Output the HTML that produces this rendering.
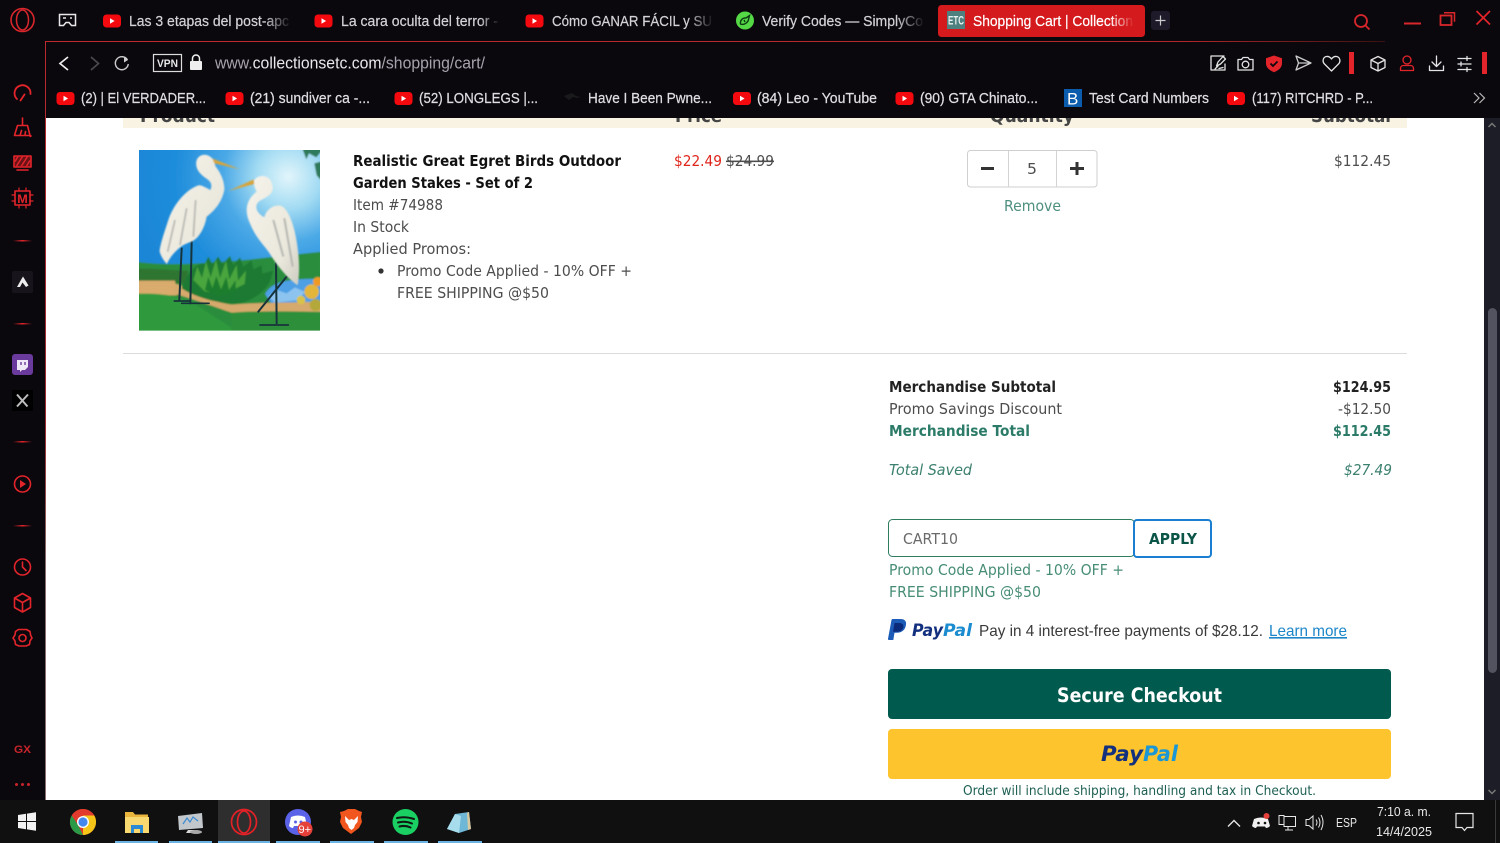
<!DOCTYPE html>
<html><head><meta charset="utf-8"><title>Shopping Cart</title>
<style>
html,body{margin:0;padding:0;background:#0a080d;width:1500px;height:843px;overflow:hidden}
svg{display:block}
text{white-space:pre}
.u{font-family:"Liberation Sans",sans-serif;font-size:14.5px;fill:#d4d2d6;stroke:#d4d2d6;stroke-width:.2px}
.b{font-family:"Liberation Sans",sans-serif;font-size:14.5px;fill:#e0dee2;stroke:#e0dee2;stroke-width:.2px}
.p{font-family:"DejaVu Sans",sans-serif;font-size:15.5px;fill:#4d4d4d}
.pb{font-family:"DejaVu Sans",sans-serif;font-size:15.5px;font-weight:bold;fill:#222}
.r{fill:none;stroke:#e3242b;stroke-width:1.6;stroke-linecap:round;stroke-linejoin:round}
.w{fill:none;stroke:#e4e4e4;stroke-width:1.3;stroke-linecap:round;stroke-linejoin:round}
</style></head><body>
<svg xmlns="http://www.w3.org/2000/svg" width="1500" height="843" viewBox="0 0 1500 843">
<defs>
<g id="yt"><rect x="0" y="0" width="18" height="13" rx="3.500" fill="#f4090f"/><path d="M7 3.800v5.400l4.600-2.700z" fill="#fff"/></g>
<radialGradient id="sky" gradientUnits="userSpaceOnUse" cx="490" cy="110" r="470"><stop offset="0" stop-color="#e2f5fb"/><stop offset=".2" stop-color="#a4dcf3"/><stop offset=".42" stop-color="#4aa8e6"/><stop offset=".72" stop-color="#1f8ddb"/><stop offset="1" stop-color="#1a86d6"/></radialGradient>
<linearGradient id="fade" x1="0" x2="1"><stop offset="0" stop-color="#0a080d" stop-opacity="0"/><stop offset="1" stop-color="#0a080d"/></linearGradient>
<linearGradient id="fader" x1="0" x2="1"><stop offset="0" stop-color="#d41a1c" stop-opacity="0"/><stop offset="1" stop-color="#d41a1c"/></linearGradient>
<linearGradient id="line" x1="0" x2="1"><stop offset="0" stop-color="#c02a2e"/><stop offset=".85" stop-color="#b3272a"/><stop offset="1" stop-color="#3a1113"/></linearGradient>
<linearGradient id="vline" x1="0" x2="0" y1="0" y2="1"><stop offset="0" stop-color="#b82a2e"/><stop offset=".5" stop-color="#a02c30"/><stop offset=".7" stop-color="#85706f"/><stop offset="1" stop-color="#85706f"/></linearGradient>
<linearGradient id="dash" x1="0" x2="1"><stop offset="0" stop-color="#e3242b" stop-opacity="0"/><stop offset=".5" stop-color="#e3242b"/><stop offset="1" stop-color="#e3242b" stop-opacity="0"/></linearGradient>
<linearGradient id="birdw" x1="0" x2="1" y1="0" y2="1"><stop offset="0" stop-color="#f6f3ea"/><stop offset=".7" stop-color="#eae7dc"/><stop offset="1" stop-color="#cfcdc2"/></linearGradient>
<clipPath id="imgclip"><rect x="42" y="30" width="543" height="542"/></clipPath>
<filter id="soft" x="-5%" y="-5%" width="110%" height="110%"><feGaussianBlur stdDeviation="2.500"/></filter>
</defs>

<rect width="1500" height="843" fill="#0a080d"/>

<!-- Page -->
<rect x="46" y="118" width="1438" height="682" fill="#fff"/>
<rect x="123" y="100" width="1284" height="28" fill="#f8f3e3"/>
<g font-family="'DejaVu Sans',sans-serif" font-size="19" font-weight="bold" fill="#444">
<text x="140" y="122" textLength="75" lengthAdjust="spacingAndGlyphs">Product</text>
<text x="675" y="122" textLength="47" lengthAdjust="spacingAndGlyphs">Price</text>
<text x="990" y="122" textLength="84" lengthAdjust="spacingAndGlyphs">Quantity</text>
<text x="1311" y="122" textLength="80" lengthAdjust="spacingAndGlyphs">Subtotal</text>
</g>

<!-- Product image -->
<g transform="translate(125 140) scale(.33333)">
<g clip-path="url(#imgclip)">
<g filter="url(#soft)">
<rect x="10" y="0" width="610" height="610" fill="url(#sky)"/>
<path d="M530 20l14 38 8-18 22 12 26-32zM568 70l30-8v70l-23-26z" fill="#2f7a5c"/>
<path d="M10 362C120 378 200 372 300 365S480 345 620 333V610H10z" fill="#2c8d3e"/>
<path d="M10 388C80 382 140 392 190 392L180 430H10z" fill="#2f7430"/>
<path d="M420 462C440 425 490 412 620 418V492L440 492z" fill="#4d9fe6"/>
<path d="M430 470l25-20 30 10 25-18 30 14-20 24-70 8z" fill="#8cc4ef"/>
<path d="M10 422H150L156 466H10z" fill="#d9ab6c"/>
<path d="M10 462C110 458 150 466 200 486L330 570V610H10z" fill="#2f9a3d"/>
<path d="M320 518C400 512 500 516 620 514V610H320z" fill="#2d8f3a"/>
<path d="M150 430L180 442C220 470 280 488 320 494C400 486 500 490 620 482V516C500 514 400 512 320 518C280 505 210 478 150 462z" fill="#d6a96c"/>
<path d="M170 445C185 395 215 370 240 370L250 350 262 372 280 350 292 372 315 348 325 375 345 352 355 380 380 360 385 388 410 375 412 400 445 392 435 425C420 455 380 485 340 490S215 475 170 445z" fill="#1f7a30"/>
<path d="M205 420l12-40 14 34 12-50 14 48 16-54 12 56 18-52 10 56 22-44 4 48 24-30-4 40-60 30-60-8z" fill="#4aa53c"/>
<path d="M240 450l10-40 12 34 12-36 14 40 16-38 8 40 20-30 0 34-50 14z" fill="#1f7d2e"/>
<circle cx="560" cy="455" r="22" fill="#e3b63b"/><circle cx="578" cy="425" r="14" fill="#f09a28"/><circle cx="572" cy="495" r="18" fill="#b5a83a"/><circle cx="528" cy="480" r="13" fill="#d9c24a"/>
</g>
<g fill="none" stroke="#17333c" stroke-width="6" stroke-linecap="round">
<path d="M170 325L163 480M200 305L196 490M453 370L455 550M485 410L400 515"/>
<path d="M148 483H195M170 490H252M405 555H490" stroke-width="5"/>
</g>
<g filter="url(#soft)">
<path d="M266 62C256 42 226 36 215 60C208 85 225 102 240 113C255 122 264 132 256 150C245 145 232 135 220 136C180 150 145 195 130 240C115 285 104 320 104 335C108 350 118 365 126 372C135 350 150 335 165 322C180 310 195 308 205 302C225 290 240 260 245 230C265 215 290 190 298 150C300 125 285 95 272 80z" fill="url(#birdw)"/>
<path d="M262 55L345 88L268 70z" fill="#d6a53c"/>
<path d="M150 240L128 335M185 205L165 315M212 180L205 290" stroke="#b4b6b0" stroke-width="5" fill="none"/>
<path d="M385 125C395 102 438 98 443 140C446 165 420 172 402 184C388 196 392 218 418 232C425 205 450 192 470 198C500 215 515 290 520 340C524 380 522 415 518 436C495 420 470 395 440 350C420 315 395 300 375 250C358 215 362 180 395 155C390 145 386 135 385 125z" fill="url(#birdw)"/>
<path d="M386 118L310 153L388 132z" fill="#d6a53c"/>
<path d="M445 240L475 350M478 235L503 380" stroke="#b4b6b0" stroke-width="6" fill="none"/>
</g>
</g>
</g>

<!-- Product text -->
<g>
<text class="pb" x="353" y="166" textLength="268" lengthAdjust="spacingAndGlyphs" style="fill:#111">Realistic Great Egret Birds Outdoor</text>
<text class="pb" x="353" y="188" textLength="180" lengthAdjust="spacingAndGlyphs" style="fill:#111">Garden Stakes - Set of 2</text>
<text class="p" x="353" y="210" textLength="90" lengthAdjust="spacingAndGlyphs">Item #74988</text>
<text class="p" x="353" y="232" textLength="56" lengthAdjust="spacingAndGlyphs">In Stock</text>
<text class="p" x="353" y="254" textLength="118" lengthAdjust="spacingAndGlyphs">Applied Promos:</text>
<circle cx="381" cy="271" r="2.600" fill="#333"/>
<text class="p" x="397" y="276" textLength="235" lengthAdjust="spacingAndGlyphs">Promo Code Applied - 10% OFF +</text>
<text class="p" x="397" y="298" textLength="152" lengthAdjust="spacingAndGlyphs">FREE SHIPPING @$50</text>
<text class="p" x="674" y="166" textLength="48" lengthAdjust="spacingAndGlyphs" style="fill:#e0261c">$22.49</text>
<text class="p" x="726" y="166" textLength="48" lengthAdjust="spacingAndGlyphs" text-decoration="line-through">$24.99</text>
<text class="p" x="1334" y="166" textLength="57" lengthAdjust="spacingAndGlyphs">$112.45</text>
</g>
<!-- Qty -->
<rect x="967.500" y="150.500" width="129.500" height="36.500" rx="3" fill="#fff" stroke="#cfcfcf"/>
<path d="M1008.500 151V187M1056.500 151V187" stroke="#d4d4d4"/>
<path d="M981 168.500H994M1070 168.500H1084M1077 162V175" stroke="#333" stroke-width="3"/>
<text class="p" x="1027" y="174" textLength="10" lengthAdjust="spacingAndGlyphs">5</text>
<text class="p" x="1004" y="211" textLength="57" lengthAdjust="spacingAndGlyphs" style="fill:#4e8f80">Remove</text>
<rect x="123" y="353" width="1284" height="1" fill="#dcdcdc"/>

<!-- Totals -->
<text class="pb" x="889" y="392" textLength="167" lengthAdjust="spacingAndGlyphs">Merchandise Subtotal</text>
<text class="pb" x="1333" y="392" textLength="58" lengthAdjust="spacingAndGlyphs">$124.95</text>
<text class="p" x="889" y="414" textLength="173" lengthAdjust="spacingAndGlyphs">Promo Savings Discount</text>
<text class="p" x="1338" y="414" textLength="53" lengthAdjust="spacingAndGlyphs">-$12.50</text>
<text class="pb" x="889" y="436" textLength="141" lengthAdjust="spacingAndGlyphs" style="fill:#2b7b68">Merchandise Total</text>
<text class="pb" x="1333" y="436" textLength="58" lengthAdjust="spacingAndGlyphs" style="fill:#2b7b68">$112.45</text>
<text class="p" x="889" y="475" textLength="83" lengthAdjust="spacingAndGlyphs" font-style="italic" style="fill:#3c806f">Total Saved</text>
<text class="p" x="1344" y="475" textLength="48" lengthAdjust="spacingAndGlyphs" font-style="italic" style="fill:#3c806f">$27.49</text>

<!-- Promo -->
<rect x="888.500" y="519.500" width="246" height="37" rx="4" fill="#fff" stroke="#2f7d5e"/>
<text class="p" x="903" y="544" textLength="55" lengthAdjust="spacingAndGlyphs" style="fill:#6a6a6a">CART10</text>
<rect x="1134" y="520" width="77" height="37" rx="3" fill="#fff" stroke="#1a7fd0" stroke-width="2"/>
<text class="pb" x="1149" y="544" textLength="48" lengthAdjust="spacingAndGlyphs" style="fill:#0b5548">APPLY</text>
<text class="p" x="889" y="575" textLength="235" lengthAdjust="spacingAndGlyphs" style="fill:#478d76">Promo Code Applied - 10% OFF +</text>
<text class="p" x="889" y="597" textLength="152" lengthAdjust="spacingAndGlyphs" style="fill:#478d76">FREE SHIPPING @$50</text>

<!-- PayPal line -->
<path d="M893.500 619h7c4.500 0 6.300 2.500 5.300 6.800-1 4.700-4.500 7-9 7h-2.300l-1.200 7.200h-4.300a1 1 0 0 1-1-1.200l3.500-18.800a1.200 1.200 0 0 1 1.200-1z" fill="#1c5cb8"/>
<path d="M894.500 623h5c3 0 4.500 1.800 3.800 4.300-.7 3-3.200 4.500-6.300 4.500h-4z" fill="#0c2a7a"/>
<text x="912" y="636" font-family="'DejaVu Sans',sans-serif" font-weight="bold" font-style="italic" font-size="17" fill="#12307e" textLength="31" lengthAdjust="spacingAndGlyphs">Pay</text>
<text x="943" y="636" font-family="'DejaVu Sans',sans-serif" font-weight="bold" font-style="italic" font-size="17" fill="#1b8ccf" textLength="29" lengthAdjust="spacingAndGlyphs">Pal</text>
<text x="979" y="636" font-family="'Liberation Sans',sans-serif" font-size="16" fill="#3a3a3a" textLength="284" lengthAdjust="spacingAndGlyphs">Pay in 4 interest-free payments of $28.12.</text>
<text x="1269" y="636" font-family="'Liberation Sans',sans-serif" font-size="16" fill="#1c86c8" textLength="78" lengthAdjust="spacingAndGlyphs" text-decoration="underline">Learn more</text>

<!-- Buttons -->
<rect x="888" y="669" width="503" height="50" rx="4" fill="#005a4e"/>
<text x="1057" y="702" font-family="'DejaVu Sans',sans-serif" font-size="19.500" font-weight="bold" fill="#fff" textLength="165" lengthAdjust="spacingAndGlyphs">Secure Checkout</text>
<rect x="888" y="729" width="503" height="50" rx="4" fill="#fec42d"/>
<text x="1101" y="761" font-family="'DejaVu Sans',sans-serif" font-weight="bold" font-style="italic" font-size="21" fill="#12307e" textLength="42" lengthAdjust="spacingAndGlyphs">Pay</text>
<text x="1143" y="761" font-family="'DejaVu Sans',sans-serif" font-weight="bold" font-style="italic" font-size="21" fill="#1b97d5" textLength="35" lengthAdjust="spacingAndGlyphs">Pal</text>
<text x="963" y="795" font-family="'DejaVu Sans',sans-serif" font-size="13.500" fill="#1d5f52" textLength="353" lengthAdjust="spacingAndGlyphs">Order will include shipping, handling and tax in Checkout.</text>

<!-- Scrollbar -->
<rect x="1484" y="118" width="16" height="682" fill="#1d1d27"/>
<rect x="1488" y="308" width="9" height="365" rx="4.500" fill="#53535f"/>
<path d="M1488.500 127l3.500-3.500 3.500 3.500M1488.500 790l3.500 3.500 3.500-3.500" fill="none" stroke="#777" stroke-width="1.500"/>

<!-- Chrome top -->
<rect x="0" y="0" width="1500" height="118" fill="#0a080d"/>
<rect x="0" y="118" width="45" height="682" fill="#0a080d"/>
<rect x="45" y="41" width="1340" height="1" fill="url(#line)"/>
<rect x="45" y="42" width="1" height="758" fill="url(#vline)"/>

<!-- Opera logo -->
<g fill="none" stroke="#d8262b"><circle cx="22.500" cy="20" r="11.500" stroke-width="1.600"/><ellipse cx="22.500" cy="20" rx="6" ry="10" stroke-width="1.500"/></g>
<!-- Game icon -->
<path d="M59.500 14.500h16v11h-4l-2.500-3h-3l-2.500 3h-4z" fill="none" stroke="#e8e8e8" stroke-width="1.500"/><path d="M63 18h3M70 18h2" stroke="#e8e8e8" stroke-width="1.500"/>

<!-- Tabs -->
<use href="#yt" x="103" y="14.500"/>
<text class="u" x="129" y="26" textLength="160" lengthAdjust="spacingAndGlyphs">Las 3 etapas del post-apc</text>
<rect x="264" y="10" width="28" height="22" fill="url(#fade)"/>
<use href="#yt" x="314.500" y="14.500"/>
<text class="u" x="341" y="26" textLength="157" lengthAdjust="spacingAndGlyphs">La cara oculta del terror -</text>
<rect x="480" y="10" width="20" height="22" fill="url(#fade)"/>
<use href="#yt" x="525.500" y="14.500"/>
<text class="u" x="552" y="26" textLength="160" lengthAdjust="spacingAndGlyphs">Cómo GANAR FÁCIL y SU</text>
<rect x="688" y="10" width="26" height="22" fill="url(#fade)"/>
<circle cx="745" cy="20.500" r="9" fill="#55d845"/>
<path d="M740.500 24c-.5-3.500 2-6.500 5.500-6l3.500-2.500-1 4c-.5 3-4.500 6-8 4.500zM745 22l-1-2" fill="none" stroke="#0c3a12" stroke-width="1.400"/>
<text class="u" x="762" y="26" textLength="161" lengthAdjust="spacingAndGlyphs">Verify Codes — SimplyCo</text>
<rect x="896" y="10" width="29" height="22" fill="url(#fade)"/>
<rect x="938" y="5" width="207" height="32" rx="3.500" fill="#d41a1c"/>
<rect x="947" y="11" width="18" height="18" fill="#4f8080"/>
<text x="948" y="24.500" font-family="'Liberation Sans',sans-serif" font-weight="bold" font-size="11.500" fill="#e8f2f0" textLength="16" lengthAdjust="spacingAndGlyphs">ETC</text>
<text class="u" x="973" y="26" textLength="160" lengthAdjust="spacingAndGlyphs" style="fill:#fff;stroke:#fff">Shopping Cart | Collection</text>
<rect x="1110" y="10" width="24" height="22" fill="url(#fader)"/>
<rect x="1151" y="11" width="19" height="19" rx="3" fill="#1f1a29"/>
<path d="M1160.500 15.500v10M1155.500 20.500h10" stroke="#c9c9cc" stroke-width="1.200"/>

<!-- Window controls -->
<circle cx="1361" cy="21" r="6" fill="none" stroke="#d8262b" stroke-width="1.800"/><path d="M1365.500 25.500l4 4" stroke="#d8262b" stroke-width="1.800"/>
<rect x="1404" y="22.500" width="17" height="2" fill="#d8262b"/>
<rect x="1440.500" y="15.500" width="11" height="9.500" fill="none" stroke="#d8262b" stroke-width="1.800"/><path d="M1444 12.800h10.500v9" fill="none" stroke="#d8262b" stroke-width="1.500"/>
<path d="M1476.500 11l13.500 13.500M1490 11l-13.500 13.500" stroke="#e3242b" stroke-width="1.700"/>

<!-- Nav -->
<path d="M68 57l-8 6.500 8 6.500" fill="none" stroke="#eee" stroke-width="1.700"/>
<path d="M91 57l7.500 6.500-7.500 6.500" fill="none" stroke="#4a4a4e" stroke-width="1.700"/>
<path d="M127.500 60a6.500 6.500 0 1 0 .8 4" fill="none" stroke="#ccc" stroke-width="1.400"/><path d="M124 56.500l4 3.500-4 2.500z" fill="#ccc"/>
<rect x="153.500" y="54.500" width="28" height="17" fill="none" stroke="#dcdcdc" stroke-width="1.200"/>
<text x="157" y="67" font-family="'Liberation Sans',sans-serif" font-weight="bold" font-size="11" fill="#e6e6e6" textLength="21" lengthAdjust="spacingAndGlyphs">VPN</text>
<rect x="190" y="61" width="12" height="9" rx="1" fill="#eee"/><path d="M192.500 61v-2.500a3.500 3.500 0 0 1 7 0V61" fill="none" stroke="#eee" stroke-width="1.500"/>
<text x="215" y="68.500" font-family="'Liberation Sans',sans-serif" font-size="16.500" fill="#a8a2ad" textLength="270" lengthAdjust="spacingAndGlyphs">www.<tspan fill="#e9e7ea">collectionsetc.com</tspan>/shopping/cart/</text>

<!-- Toolbar icons -->
<path d="M1224 56h-13v14h14v-6" class="w"/><path d="M1216.500 66l1.500-4 5-5.500 2.500 2.500-5 5zM1215 69l3-3M1219 68.500l4-1" class="w"/>
<path d="M1238 59.500h3.500l1.500-2h5l1.500 2h3.500v10.500h-15z" class="w"/><circle cx="1245.500" cy="64.500" r="3.300" class="w"/>
<path d="M1274 55.500l8 2.800v5c0 4.500-3.500 7-8 9-4.500-2-8-4.500-8-9v-5z" fill="#e3242b"/><path d="M1270.500 63.500l2.500 2.500 4.500-4.500" fill="none" stroke="#0a080d" stroke-width="1.700"/>
<path d="M1296 56l15 7-15 7 2.500-7zM1298.500 63h12" class="w" style="stroke:#ccc"/>
<path d="M1331.500 71l-7-7c-2.500-2.500-1.500-7 2-7.500 2.500-.3 4 1 5 2.500 1-1.500 2.500-2.800 5-2.500 3.500.5 4.500 5 2 7.500z" class="w"/>
<rect x="1349" y="52" width="5" height="22" fill="#e3242b"/>
<path d="M1378 56.500l7 3.500v7.500l-7 3.500-7-3.500V60zM1371 60l7 3.500 7-3.500M1378 63.500V71" class="w"/>
<circle cx="1407" cy="60" r="4" class="r" style="stroke-width:1.300"/><path d="M1400.500 70.500v-2c0-2 1.500-3 3-3h7c1.500 0 3 1 3 3v2z" class="r" style="stroke-width:1.300"/>
<path d="M1436.500 56v10M1432 62l4.500 4.500 4.500-4.500M1429.500 66v4.500h14V66" class="w"/>
<path d="M1458 58.500h13M1458 64h13M1458 69.500h13" class="w"/><path d="M1467 56.500v4M1461 62v4M1467 67.500v4" class="w"/>
<rect x="1482" y="52" width="5" height="22" fill="#e3242b"/>

<!-- Bookmarks -->
<use href="#yt" x="56.500" y="92"/>
<text class="b" x="81" y="103" textLength="125" lengthAdjust="spacingAndGlyphs">(2) | El VERDADER...</text>
<use href="#yt" x="225.500" y="92"/>
<text class="b" x="250" y="103" textLength="120" lengthAdjust="spacingAndGlyphs">(21) sundiver ca -...</text>
<use href="#yt" x="394.500" y="92"/>
<text class="b" x="419" y="103" textLength="119" lengthAdjust="spacingAndGlyphs">(52) LONGLEGS |...</text>
<path d="M564 96l8-3 4 3 5 1-4 1-4-1-4 3z" fill="#1a1a1c"/>
<text class="b" x="588" y="103" textLength="124" lengthAdjust="spacingAndGlyphs">Have I Been Pwne...</text>
<use href="#yt" x="733" y="92"/>
<text class="b" x="757" y="103" textLength="120" lengthAdjust="spacingAndGlyphs">(84) Leo - YouTube</text>
<use href="#yt" x="895.500" y="92"/>
<text class="b" x="920" y="103" textLength="118" lengthAdjust="spacingAndGlyphs">(90) GTA Chinato...</text>
<rect x="1064" y="89" width="18" height="18" fill="#0b5cad"/>
<text x="1067" y="104.500" font-family="'Liberation Sans',sans-serif" font-size="17" fill="#fff">B</text>
<text class="b" x="1089" y="103" textLength="120" lengthAdjust="spacingAndGlyphs">Test Card Numbers</text>
<use href="#yt" x="1227" y="92"/>
<text class="b" x="1252" y="103" textLength="121" lengthAdjust="spacingAndGlyphs">(117) RITCHRD - P...</text>
<path d="M1474 93l5 5-5 5M1479.500 93l5 5-5 5" fill="none" stroke="#bbb" stroke-width="1.200"/>

<!-- Sidebar -->
<path d="M17 99a8 8 0 1 1 13.500-5" class="r" style="stroke-width:1.800"/><path d="M20.500 100.500l4-6" class="r" style="stroke-width:1.800"/>
<path d="M22.500 118v7M17.500 125.500h10l2.500 10H14.500zM20 135.500l1.500-5M25 135.500l.5-4" class="r"/><circle cx="30.500" cy="136" r="1.200" fill="#e3242b"/>
<rect x="14" y="156" width="17" height="11" class="r" style="fill:#6a1216"/><path d="M16.500 166l6-9.500M21.500 166l6-9.500M26.500 166l3.500-5.500M15 161.500l3-5" stroke="#e3242b" stroke-width="1.500"/><path d="M17 170h11" class="r"/>
<rect x="15" y="191" width="15" height="14" class="r"/><text x="17.300" y="203" font-family="'Liberation Sans',sans-serif" font-weight="bold" font-size="12" fill="#e3242b" textLength="10.500" lengthAdjust="spacingAndGlyphs">M</text><path d="M19 188v3M26 188v3M19 205v3M26 205v3M12 195h3M12 201h3M30 195h3M30 201h3" class="r" style="stroke-width:1.200"/>
<rect x="13" y="240" width="19" height="1.500" fill="url(#dash)"/>
<rect x="12" y="271" width="21" height="22" rx="2" fill="#17151b"/><path d="M17 287l4.500-8 1.500-2.500 5.500 9-2.500 1.500-3.500-4.500-2.500 4.500z" fill="#ededed"/>
<rect x="13" y="323" width="19" height="1.500" fill="url(#dash)"/>
<rect x="12" y="354" width="21" height="21" rx="3" fill="#6a3a9c"/><path d="M17 360h11v7l-3 3h-3l-2 2v-2h-3z" fill="#efe8f6"/><path d="M21 362v3M25 362v3" stroke="#6a3a9c" stroke-width="1.400"/>
<rect x="12" y="390" width="21" height="21" fill="#000"/><path d="M17 394.500l10.500 12M28 394.500l-11 12" stroke="#bdbdbd" stroke-width="2"/>
<rect x="13" y="441" width="19" height="1.500" fill="url(#dash)"/>
<circle cx="22.500" cy="484" r="8" class="r"/><path d="M20 480l6 4-6 4z" fill="#e3242b"/>
<rect x="13" y="525" width="19" height="1.500" fill="url(#dash)"/>
<circle cx="22.500" cy="567" r="8" class="r"/><path d="M22.500 562v5l3.500 3.500" class="r"/>
<path d="M22.500 593.500l8 4.500v9.500l-8 4.500-8-4.500V598zM14.500 598l8 4.500 8-4.500M22.500 602.500V612" class="r"/>
<path d="M18.500 629.500q4 0 8 0l3.500 2q.5 2 .5 3.500l1.500 3-2 3-.5 3.500-3.500 1.500h-7l-3.500-1.500-.5-3.500-2-3 2-3 .5-3.500z" class="r"/><circle cx="22.500" cy="638" r="3.500" class="r"/>
<text x="14" y="753" font-family="'Liberation Sans',sans-serif" font-weight="bold" font-size="11" fill="#c8242a" textLength="17" lengthAdjust="spacingAndGlyphs">GX</text>
<g fill="#c8242a"><circle cx="16.500" cy="784.500" r="1.500"/><circle cx="22.500" cy="784.500" r="1.500"/><circle cx="28.500" cy="784.500" r="1.500"/></g>

<!-- Taskbar -->
<rect x="0" y="800" width="1500" height="43" fill="#101010"/>
<rect x="218" y="800" width="52" height="43" fill="#2e2e2e"/>
<g fill="#f2f2f2"><path d="M18 815l8-1.200V821h-8zM27 813.600l9-1.300V821h-9zM18 822h8v7.200l-8-1.200zM27 822h9v8.700l-9-1.300z"/></g>
<circle cx="83" cy="822" r="13" fill="#e23b2e"/><path d="M83 835a13 13 0 0 1-11.300-19.500L78 825z" fill="#2a9a47"/><path d="M83 835a13 13 0 0 0 11.300-19.500H83z" fill="#f5c518"/><path d="M94.300 815.500H83l-5 5L71.700 815.500A13 13 0 0 1 83 809a13 13 0 0 1 11.300 6.500z" fill="#e23b2e"/><circle cx="83" cy="822" r="6" fill="#fff"/><circle cx="83" cy="822" r="4.600" fill="#4487ee"/>
<path d="M125 812h8l2 2.500h13v18.500h-23z" fill="#e9b53d"/><rect x="125" y="817" width="24" height="16" fill="#f7d970"/><path d="M131 825h12v8h-3v-4h-6v4h-3z" fill="#2a8ad4"/>
<path d="M178 816l24-3 1 15-24 2z" fill="#c2c7cc"/><path d="M183 824l4-6 3 4 3-5 5 4" fill="none" stroke="#3c8bd1" stroke-width="1.200"/><path d="M188 830h6l8 3h-16z" fill="#d8d8d8"/><ellipse cx="196" cy="832" rx="6" ry="2" fill="#a8a8a8"/>
<circle cx="244" cy="822" r="12.500" fill="none" stroke="#e32127" stroke-width="1.700"/><ellipse cx="244" cy="822" rx="6.500" ry="11" fill="none" stroke="#e32127" stroke-width="1.700"/>
<circle cx="298" cy="822" r="13" fill="#5a62e8"/><path d="M291 817q7-3 14 0l2 9q-2 2-4 2l-1-2h-8l-1 2q-2 0-4-2z" fill="#fff"/><circle cx="295.500" cy="822" r="1.500" fill="#5a62e8"/><circle cx="301" cy="822" r="1.500" fill="#5a62e8"/>
<circle cx="305" cy="829" r="7.500" fill="#e5403a"/><text x="298.500" y="833" font-family="'Liberation Sans',sans-serif" font-size="11" fill="#fff">9+</text>
<path d="M344 811l4-2h7l4 2 3 1-1 5 1 5-3 6-8 6-8-6-3-6 1-5-1-5z" fill="#f0561d"/><path d="M345 816l4 4 2.500-1 2.500 1 4-4-.5 6-2.500 3-1 3-2.500 2-2.500-2-1-3-2.500-3z" fill="#fff"/>
<circle cx="405.500" cy="822" r="13" fill="#1ad063"/><path d="M397 818q8-2 17 1M398 822.500q7-2 14 1M399.500 826.500q6-1.500 11 1" fill="none" stroke="#0e1a12" stroke-width="2" stroke-linecap="round"/>
<path d="M447 829l8-15 14-2 2 17-12 4z" fill="#6fb7d6"/><path d="M447 829l12 4 2-17-6-2z" fill="#a7dcec"/><path d="M469 812l2 17-3 1-1-17z" fill="#d8c9a0"/>
<g fill="#6bb3e2"><rect x="115" y="841" width="43" height="2"/><rect x="169" y="841" width="43" height="2"/><rect x="218" y="841" width="52" height="2"/><rect x="276" y="841" width="44" height="2"/><rect x="330" y="841" width="44" height="2"/><rect x="384" y="841" width="44" height="2"/><rect x="438" y="841" width="44" height="2"/></g>

<!-- Tray -->
<path d="M1228 826.500l6-6 6 6" fill="none" stroke="#e6e6e6" stroke-width="1.400"/>
<path d="M1254 819q7-3 14 0l2 7q-2 2-4 2l-1-1.500h-8l-1 1.500q-2 0-4-2z" fill="#f0f0f0"/><circle cx="1258.500" cy="823" r="1.300" fill="#101010"/><circle cx="1265" cy="823" r="1.300" fill="#101010"/><circle cx="1266.500" cy="816" r="3" fill="#e5403a"/>
<rect x="1284" y="816.500" width="11.500" height="10" fill="none" stroke="#e6e6e6"/><rect x="1279" y="815.500" width="5" height="9" fill="none" stroke="#e6e6e6"/><path d="M1288 827v3h-3h8" fill="none" stroke="#e6e6e6"/>
<path d="M1306 819.500h3l4-3.500v13l-4-3.500h-3zM1316 819.500q2 3 0 6M1318.500 817.500q3 5 0 10M1321 815q4 7 0 15" fill="none" stroke="#e6e6e6"/>
<text x="1336" y="827" font-family="'Liberation Sans',sans-serif" font-size="13" fill="#e8e8e8" textLength="21" lengthAdjust="spacingAndGlyphs">ESP</text>
<text x="1377" y="816" font-family="'Liberation Sans',sans-serif" font-size="13" fill="#e8e8e8" textLength="54" lengthAdjust="spacingAndGlyphs">7:10 a. m.</text>
<text x="1376" y="836" font-family="'Liberation Sans',sans-serif" font-size="13" fill="#e8e8e8" textLength="56" lengthAdjust="spacingAndGlyphs">14/4/2025</text>
<path d="M1456 813.500h17v14h-6l-2.500 3-2.500-3h-6z" fill="none" stroke="#e6e6e6" stroke-width="1.200"/>
<rect x="1495" y="800" width="1" height="43" fill="#3a3a3a"/>
</svg>
</body></html>
